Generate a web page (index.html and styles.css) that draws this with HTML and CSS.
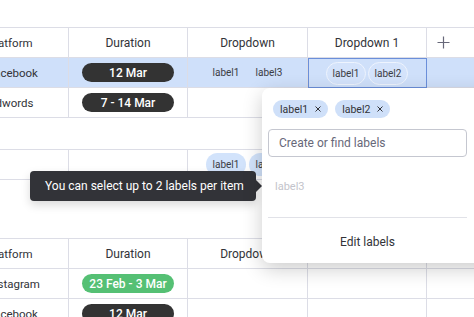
FILE: index.html
```html
<!DOCTYPE html>
<html>
<head>
<meta charset="utf-8">
<link rel="stylesheet" href="styles.css">
</head>
<body>
<div class="page">
  <div class="sheet">
    <div class="group group-a">
      <div class="row head">
        <div class="cell c1">Platform</div>
        <div class="cell c2">Duration</div>
        <div class="cell c3">Dropdown</div>
        <div class="cell c4">Dropdown 1</div>
        <div class="cell c5"><svg class="plus" width="13" height="13" viewBox="0 0 13 13"><path d="M6.5 0.5v12M0.5 6.5h12" stroke="#676879" stroke-width="1.2" fill="none"/></svg></div>
      </div>
      <div class="row selected">
        <div class="cell c1">Facebook</div>
        <div class="cell c2"><span class="pill dark">12 Mar</span></div>
        <div class="cell c3"><span class="chip plain">label1</span><span class="chip plain">label3</span></div>
        <div class="cell c4 active"><span class="chip ring">label1</span><span class="chip ring">label2</span></div>
        <div class="cell c5"></div>
      </div>
      <div class="row">
        <div class="cell c1">Adwords</div>
        <div class="cell c2"><span class="pill dark">7 - 14 Mar</span></div>
        <div class="cell c3"></div>
        <div class="cell c4"></div>
        <div class="cell c5"></div>
      </div>
    </div>

    <div class="group group-b">
      <div class="row">
        <div class="cell c1"></div>
        <div class="cell c2"></div>
        <div class="cell c3"><span class="chip blue">label1</span><span class="chip blue">label2</span></div>
        <div class="cell c4"></div>
        <div class="cell c5"></div>
      </div>
    </div>

    <div class="group group-c">
      <div class="row head">
        <div class="cell c1">Platform</div>
        <div class="cell c2">Duration</div>
        <div class="cell c3">Dropdown</div>
        <div class="cell c4">Dropdown 1</div>
        <div class="cell c5"></div>
      </div>
      <div class="row">
        <div class="cell c1">Instagram</div>
        <div class="cell c2"><span class="pill green">23 Feb - 3 Mar</span></div>
        <div class="cell c3"></div>
        <div class="cell c4"></div>
        <div class="cell c5"></div>
      </div>
      <div class="row">
        <div class="cell c1">Facebook</div>
        <div class="cell c2"><span class="pill dark">12 Mar</span></div>
        <div class="cell c3"></div>
        <div class="cell c4"></div>
        <div class="cell c5"></div>
      </div>
    </div>
  </div>

  <div class="tooltip">You can select up to 2 labels per item</div>

  <div class="popup">
    <div class="popup-inner">
      <div class="selected-chips">
        <span class="tag">label1 <svg width="6" height="6" viewBox="0 0 6 6"><path d="M0.5 0.5l5 5M5.5 0.5l-5 5" stroke="#323338" stroke-width="1" fill="none"/></svg></span>
        <span class="tag">label2 <svg width="6" height="6" viewBox="0 0 6 6"><path d="M0.5 0.5l5 5M5.5 0.5l-5 5" stroke="#323338" stroke-width="1" fill="none"/></svg></span>
      </div>
      <div class="search">Create or find labels</div>
      <div class="option">label3</div>
      <div class="divider"></div>
      <div class="edit">Edit labels</div>
    </div>
  </div>
</div>
</body>
</html>
```

FILE: styles.css
```css
html, body {
  margin: 0;
  padding: 0;
  overflow: hidden;
  background: #ffffff;
}
body {
  width: 474px;
  height: 317px;
  font-family: Roboto, "Liberation Sans", sans-serif;
  color: #323338;
  font-size: 12px;
}
.page {
  position: relative;
  width: 474px;
  height: 317px;
  overflow: hidden;
}
.sheet {
  margin-left: -40px;
  width: 560px;
  padding-top: 27px;
}
.group {
  border-top: 1px solid #dcdde6;
}
.group-b { margin-top: 31px; }
.group-c { margin-top: 58px; }
.row {
  display: flex;
  height: 29px;
  border-bottom: 1px solid #dcdde6;
}
.row.selected { background: #cfe0fa; }
.cell {
  display: flex;
  align-items: center;
  justify-content: center;
  gap: 3px;
  border-right: 1px solid #dcdde6;
  box-sizing: border-box;
  height: 29px;
}
.c1 { width: 109px; justify-content: flex-start; padding-left: 28px; font-size: 11.5px; }
.c2 { width: 119px; }
.c3 { width: 120px; }
.c4 { width: 119px; gap: 2px; }
.c5 { flex: 1; border-right: none; justify-content: flex-start; padding-left: 10px; }
.head .cell { font-size: 12px; }
.head .c1 { font-size: 11.5px; }
.cell.active {
  outline: 1px solid #6b8fda;
  outline-offset: -1px;
  height: 30px;
  margin-bottom: -1px;
  border-right-color: #6b8fda;
}
.pill {
  display: inline-flex;
  align-items: center;
  justify-content: center;
  width: 92px;
  height: 19px;
  border-radius: 10px;
  color: #ffffff;
  font-size: 12px;
  font-weight: 500;
}
.pill.dark { background: #333333; }
.pill.green { background: #55c074; }
.chip {
  display: inline-flex;
  align-items: center;
  justify-content: center;
  box-sizing: border-box;
  width: 40px;
  height: 23px;
  border-radius: 12px;
  font-size: 10px;
  color: #3b3c44;
}
.chip.plain { background: #cfe0fa; }
.chip.ring { background: #d4e3fb; border: 1px solid #eef4fe; }
.chip.blue { background: #d2e3fb; }
.tooltip {
  position: absolute;
  left: 30px;
  top: 171px;
  width: 226px;
  height: 30px;
  box-sizing: border-box;
  background: #323338;
  color: #ffffff;
  border-radius: 4px;
  font-size: 12px;
  display: flex;
  align-items: center;
  padding-left: 15px;
  box-shadow: 0 4px 10px rgba(0,0,0,0.15);
}
.tooltip::after {
  content: "";
  position: absolute;
  right: -6px;
  top: 9px;
  border-top: 6px solid transparent;
  border-bottom: 6px solid transparent;
  border-left: 6px solid #323338;
}
.popup {
  position: absolute;
  left: 262px;
  top: 88px;
  width: 240px;
  height: 175px;
  background: #ffffff;
  border-radius: 8px;
  box-shadow: 0 6px 20px rgba(0,0,0,0.2);
}
.popup-inner {
  width: 199px;
  padding: 12px 0 0 6px;
  display: flex;
  flex-direction: column;
}
.selected-chips {
  display: flex;
  gap: 7px;
  padding-left: 5px;
  height: 18px;
}
.tag {
  display: inline-flex;
  align-items: center;
  gap: 7px;
  height: 18px;
  padding: 0 7px 0 7px;
  border-radius: 9px;
  background: #cfe0f9;
  font-size: 10.5px;
  color: #323338;
}
.search {
  margin-top: 11px;
  height: 28px;
  box-sizing: border-box;
  border: 1px solid #c5c7d0;
  border-radius: 4px;
  display: flex;
  align-items: center;
  padding-left: 10px;
  color: #676879;
  font-size: 12px;
}
.option {
  margin-top: 22px;
  padding-left: 7px;
  height: 16px;
  line-height: 16px;
  font-size: 11px;
  color: #c3c4cb;
}
.divider {
  margin-top: 22px;
  height: 1px;
  background: #e1e2e8;
}
.edit {
  margin-top: 17px;
  text-align: center;
  font-size: 12px;
  color: #323338;
}
```
